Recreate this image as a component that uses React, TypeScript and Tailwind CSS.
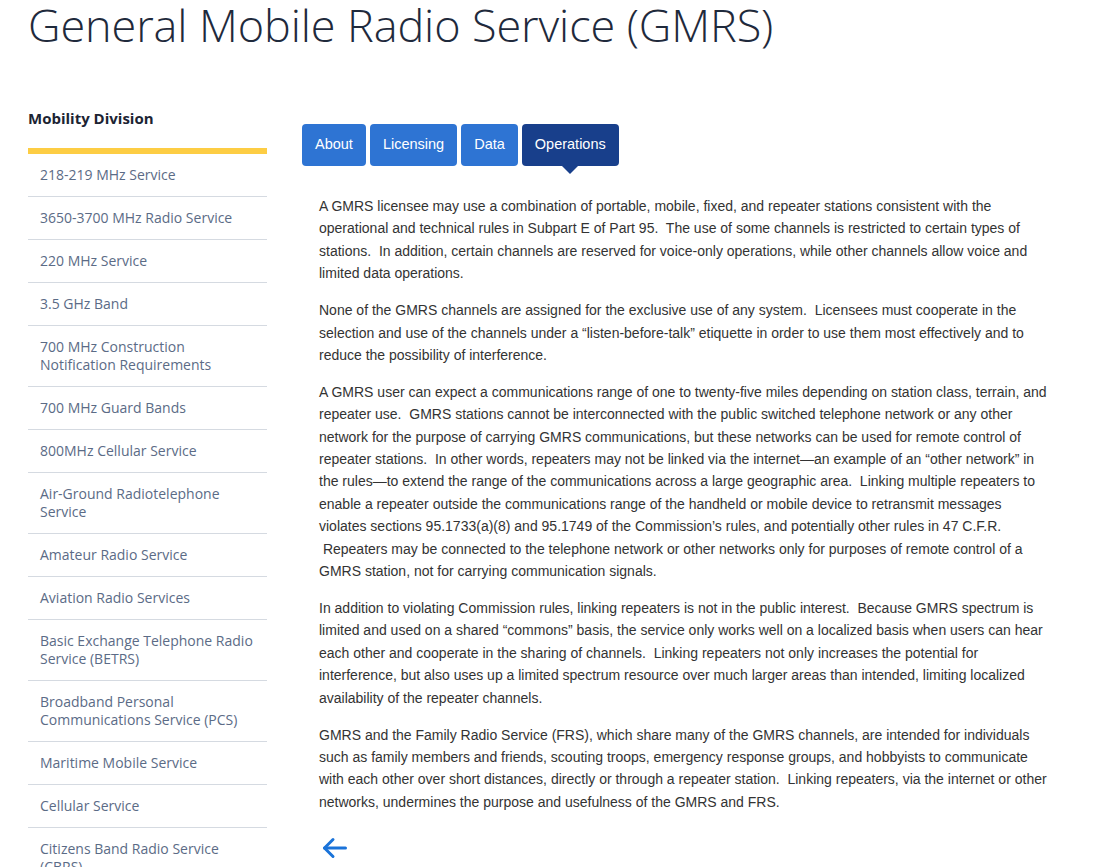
import React from "react";

const navItems: string[] = [
  "218-219 MHz Service",
  "3650-3700 MHz Radio Service",
  "220 MHz Service",
  "3.5 GHz Band",
  "700 MHz Construction Notification Requirements",
  "700 MHz Guard Bands",
  "800MHz Cellular Service",
  "Air-Ground Radiotelephone Service",
  "Amateur Radio Service",
  "Aviation Radio Services",
  "Basic Exchange Telephone Radio Service (BETRS)",
  "Broadband Personal Communications Service (PCS)",
  "Maritime Mobile Service",
  "Cellular Service",
  "Citizens Band Radio Service (CBRS)",
];

const tabs = ["About", "Licensing", "Data", "Operations"];

const paragraphs: string[] = [
  "A GMRS licensee may use a combination of portable, mobile, fixed, and repeater stations consistent with the operational and technical rules in Subpart E of Part 95.\u00a0 The use of some channels is restricted to certain types of stations.\u00a0 In addition, certain channels are reserved for voice-only operations, while other channels allow voice and limited data operations.",
  "None of the GMRS channels are assigned for the exclusive use of any system.\u00a0 Licensees must cooperate in the selection and use of the channels under a \u201clisten-before-talk\u201d etiquette in order to use them most effectively and to reduce the possibility of interference.",
  "A GMRS user can expect a communications range of one to twenty-five miles depending on station class, terrain, and repeater use.\u00a0 GMRS stations cannot be interconnected with the public switched telephone network or any other network for the purpose of carrying GMRS communications, but these networks can be used for remote control of repeater stations.\u00a0 In other words, repeaters may not be linked via the internet\u2014an example of an \u201cother network\u201d in the rules\u2014to extend the range of the communications across a large geographic area.\u00a0 Linking multiple repeaters to enable a repeater outside the communications range of the handheld or mobile device to retransmit messages violates sections 95.1733(a)(8) and 95.1749 of the Commission\u2019s rules, and potentially other rules in 47 C.F.R. \u00a0Repeaters may be connected to the telephone network or other networks only for purposes of remote control of a GMRS station, not for carrying communication signals.",
  "In addition to violating Commission rules, linking repeaters is not in the public interest.\u00a0 Because GMRS spectrum is limited and used on a shared \u201ccommons\u201d basis, the service only works well on a localized basis when users can hear each other and cooperate in the sharing of channels.\u00a0 Linking repeaters not only increases the potential for interference, but also uses up a limited spectrum resource over much larger areas than intended, limiting localized availability of the repeater channels.",
  "GMRS and the Family Radio Service (FRS), which share many of the GMRS channels, are intended for individuals such as family members and friends, scouting troops, emergency response groups, and hobbyists to communicate with each other over short distances, directly or through a repeater station.\u00a0 Linking repeaters, via the internet or other networks, undermines the purpose and usefulness of the GMRS and FRS.",
];

const App: React.FC = () => {
  return (
    <div className="min-h-screen bg-white overflow-hidden h-[867px]" style={{ fontFamily: '"Open Sans", sans-serif' }}>
      {/* page title */}
      <h1 className="pl-[28px] text-[45px] font-light leading-[50px] text-[#1f2a3c] tracking-[-0.1px]">
        General Mobile Radio Service (GMRS)
      </h1>

      <div className="flex pl-[28px] mt-[58px]">
        {/* sidebar */}
        <aside className="w-[239px] shrink-0">
          <h2 className="text-[15px] font-bold text-[#1c2433] leading-[20px]">Mobility Division</h2>
          <div className="h-[6px] bg-[#fdcd44] mt-[20px]" />
          <ul>
            {navItems.map((item) => (
              <li
                key={item}
                className="border-b border-[#d5dae1] pl-[12px] pr-[8px] py-[12px] text-[14px] leading-[18px] text-[#5b6b86]"
              >
                {item}
              </li>
            ))}
          </ul>
        </aside>

        {/* main content */}
        <main className="ml-[35px] w-[770px] pt-[16px]">
          <div className="flex gap-[4px]">
            {tabs.map((t) => {
              const active = t === "Operations";
              return (
                <div key={t} className="relative">
                  <div
                    className={
                      active
                        ? "h-[42px] px-[13px] flex items-center rounded-[4px] bg-[#183f8b] text-white text-[14.5px]"
                        : "h-[42px] px-[13px] flex items-center rounded-[4px] bg-[#2e74d3] text-white text-[14.5px]"
                    }
                    style={{ fontFamily: '"Liberation Sans", Arial, sans-serif' }}
                  >
                    {t}
                  </div>
                  {active && (
                    <div className="absolute left-1/2 -translate-x-1/2 top-[42px] w-0 h-0 border-l-[8px] border-r-[8px] border-t-[8px] border-l-transparent border-r-transparent border-t-[#183f8b]" />
                  )}
                </div>
              );
            })}
          </div>

          <div
            className="pl-[17px] w-[749px] mt-[29px] text-[14px] leading-[22.4px] text-[#333333]"
            style={{ fontFamily: '"Liberation Sans", Arial, sans-serif' }}
          >
            {paragraphs.map((p, i) => (
              <p key={i} className="mb-[14.5px]">
                {p}
              </p>
            ))}
            <div className="mt-[23px] pl-[2px] text-[#1a73d9]">
              <svg width="27" height="24" viewBox="0 0 27 24" fill="none" stroke="currentColor" strokeWidth="3" strokeLinecap="round" strokeLinejoin="round">
                <path d="M24.5 12H3.5" />
                <path d="M12 3.5L3.5 12l8.5 8.5" />
              </svg>
            </div>
          </div>
        </main>
      </div>
    </div>
  );
};

export default App;
